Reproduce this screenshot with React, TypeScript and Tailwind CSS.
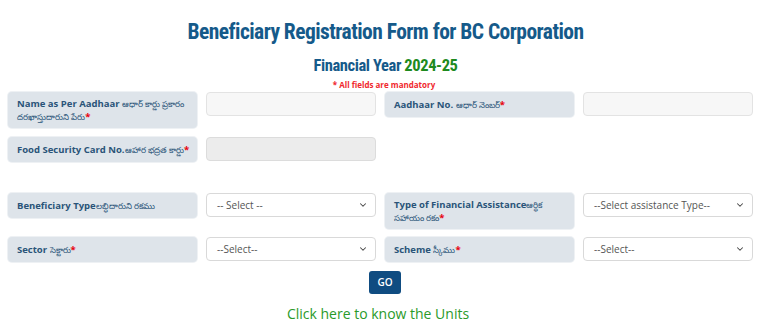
import { ChevronDown } from "lucide-react";

const label = "flex items-center rounded-sm bg-[#dee4ea] pl-[9px] pr-[6px] text-[9.5px] font-bold leading-[13px] text-[#2a5479] shadow-[0_0_0_1px_#eef1f4]";
const box = "h-[24px] rounded-sm border border-[#e3e3e3] bg-[#f7f7f7]";
const te = "text-[8.5px] font-normal";

function Star() {
    return <span className="text-red-600">*</span>;
}

function Select({ text }: { text: string }) {
    return (
        <div className="flex h-[24px] items-center justify-between rounded-sm border border-[#d9d9d9] bg-white pl-[10px] pr-[7px] text-[10px] text-[#555]">
            <span>{text}</span>
            <ChevronDown size={10} strokeWidth={2.5} className="text-[#444]" />
        </div>
    );
}

export default function App() {
    return (
        <div className="h-[334px] w-[768px] bg-white font-['Open_Sans','Noto_Sans',sans-serif]">
            <h1 className="pt-[19px] pl-[3px] text-center font-['Roboto',sans-serif] text-[21.5px] font-bold leading-[26px] tracking-[-0.55px] text-[#155a8a] [font-stretch:condensed]">
                Beneficiary Registration Form for BC Corporation
            </h1>
            <h2 className="mt-[11px] pl-[3px] text-center font-['Roboto',sans-serif] text-[16.5px] font-bold leading-[20px] tracking-[-0.4px] text-[#155a8a] [font-stretch:condensed]">
                Financial Year <span className="text-[#1e8a1e]">2024-25</span>
            </h2>
            <p className="mt-[3px] text-center text-[8px] font-bold leading-[11px] text-[#f0282d]">* All fields are mandatory</p>

            <div className="mt-[2px] grid grid-cols-[189px_170px_189px_170px] gap-x-[9px] pl-[8px]">
                <div className={`${label} h-[36px]`}>
                    <span>
                        Name as Per Aadhaar <span className={te}>ఆధార్ కార్డు ప్రకారం దరఖాస్తుదారుని పేరు</span>
                        <Star />
                    </span>
                </div>
                <div className={box} />
                <div className={`${label} h-[25px] self-start`}>
                    <span>
                        Aadhaar No. <span className={te}>ఆధార్ నెంబర్</span><Star />
                    </span>
                </div>
                <div className={box} />

                <div className={`${label} mt-[9px] h-[25px]`}>
                    <span>
                        Food Security Card No.<span className={te}>ఆహార భద్రత కార్డు</span><Star />
                    </span>
                </div>
                <div className={`mt-[9px] h-[24px] rounded-sm border border-[#dcdcdc] bg-[#ececec]`} />
                <div />
                <div />

                <div className={`${label} mt-[31px] h-[25px] self-start`}>
                    <span>Beneficiary Type<span className={te}>లబ్ధిదారుని రకము</span></span>
                </div>
                <div className="mt-[31px]">
                    <Select text="-- Select --" />
                </div>
                <div className={`${label} mt-[31px] h-[36px]`}>
                    <span>
                        Type of Financial Assistance<span className={te}>ఆర్థిక సహాయం రకం</span><Star />
                    </span>
                </div>
                <div className="mt-[31px]">
                    <Select text="--Select assistance Type--" />
                </div>

                <div className={`${label} mt-[8px] h-[25px]`}>
                    <span>
                        Sector <span className={te}>సెక్టారు</span><Star />
                    </span>
                </div>
                <div className="mt-[8px]">
                    <Select text="--Select--" />
                </div>
                <div className={`${label} mt-[8px] h-[25px]`}>
                    <span>
                        Scheme <span className={te}>స్కీము</span><Star />
                    </span>
                </div>
                <div className="mt-[8px]">
                    <Select text="--Select--" />
                </div>
            </div>

            <div className="mt-[9px] flex justify-center pl-[2px]">
                <button className="h-[23px] w-[32px] rounded-[3px] bg-[#0f4c81] text-[10px] font-semibold text-white">GO</button>
            </div>
            <p className="mt-[11px] pr-[12px] text-center text-[14px] leading-[18px] text-[#2a9a2a]">Click here to know the Units</p>
        </div>
    );
}
